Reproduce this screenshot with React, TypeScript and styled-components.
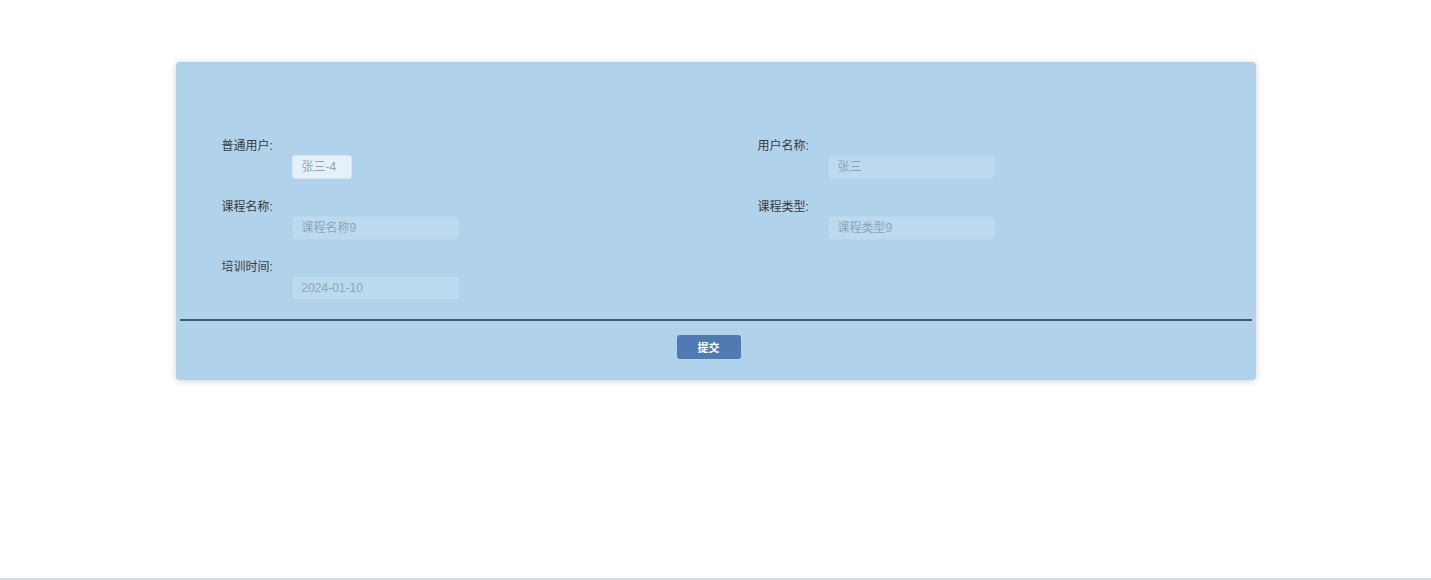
import React from "react";
import styled, { createGlobalStyle } from "styled-components";

const GlobalStyle = createGlobalStyle`
  html, body {
    margin: 0;
    padding: 0;
    background: #ffffff;
    font-family: "Liberation Sans", "Noto Sans CJK SC", sans-serif;
  }
  * {
    box-sizing: border-box;
  }
`;

const Page = styled.div`
  height: 580px;
  padding-top: 62px;
  border-bottom: 2px solid #d3dbe4;
`;

const Card = styled.div`
  width: 1080px;
  margin: 0 auto;
  background: #b0d3eb;
  border-radius: 4px;
  box-shadow: 0 1px 6px rgba(0, 0, 0, 0.18);
  padding: 76px 4px 21px;
`;

const Grid = styled.div`
  display: grid;
  grid-template-columns: 536px 536px;
  row-gap: 19.5px;
`;

const Field = styled.div`
  padding-left: 42px;
  display: flex;
  flex-direction: column;
`;

const Label = styled.label`
  font-size: 12px;
  line-height: 16px;
  height: 17px;
  color: #3a3a3a;
`;

const Input = styled.input<{ $w: number; $light?: boolean }>`
  width: ${(p) => p.$w}px;
  height: 24px;
  margin-left: 70px;
  padding: 0 9px;
  border: 1px solid ${(p) => (p.$light ? "#d6e6f3" : "#b6d6ec")};
  border-radius: 3px;
  background: ${(p) => (p.$light ? "#e5f0f8" : "#bcd9ee")};
  font-family: "Liberation Sans", "Noto Sans CJK SC", sans-serif;
  font-size: 12px;
  color: #999;
  outline: none;
  &::placeholder {
    color: ${(p) => (p.$light ? "#9aa3ab" : "#8ea5b6")};
  }
`;

const Divider = styled.hr`
  margin: 19px 0 14px;
  border: none;
  height: 2px;
  background: #435578;
`;

const Footer = styled.div`
  display: flex;
  justify-content: center;
  padding-right: 14px;
`;

const SubmitButton = styled.button`
  width: 64px;
  height: 24px;
  border: none;
  border-radius: 3px;
  background: #4e7bb4;
  color: #fff;
  font-family: "Liberation Sans", "Noto Sans CJK SC", sans-serif;
  font-size: 11px;
  font-weight: bold;
  cursor: pointer;
`;

const fields = [
  { label: "普通用户:", value: "张三-4", w: 60, light: true },
  { label: "用户名称:", value: "张三", w: 167 },
  { label: "课程名称:", value: "课程名称9", w: 167 },
  { label: "课程类型:", value: "课程类型9", w: 167 },
  { label: "培训时间:", value: "2024-01-10", w: 167 },
];

export default function App() {
  return (
    <>
      <GlobalStyle />
      <Page>
        <Card>
          <Grid>
            {fields.map((f) => (
              <Field key={f.label}>
                <Label>{f.label}</Label>
                <Input $w={f.w} $light={f.light} placeholder={f.value} readOnly />
              </Field>
            ))}
          </Grid>
          <Divider />
          <Footer>
            <SubmitButton>提交</SubmitButton>
          </Footer>
        </Card>
      </Page>
    </>
  );
}
